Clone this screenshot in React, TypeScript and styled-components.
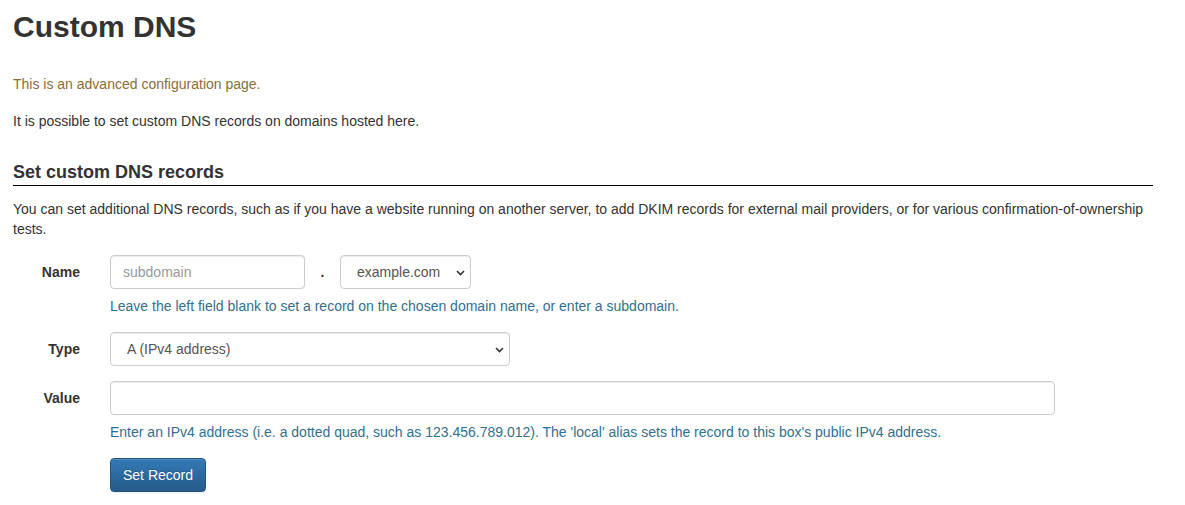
import React, { useState } from 'react';
import styled, { createGlobalStyle } from 'styled-components';

const GlobalStyle = createGlobalStyle`
  html, body {
    margin: 0;
    padding: 0;
    background: #fff;
  }
  body {
    font-family: "Liberation Sans", Arial, Helvetica, sans-serif;
    font-size: 14px;
    line-height: 20px;
    color: #333;
  }
  * {
    box-sizing: border-box;
  }
`;

const Page = styled.div`
  width: 1140px;
  margin-left: 13px;
`;

const Title = styled.h1`
  font-size: 30px;
  font-weight: bold;
  line-height: 33px;
  margin: 10px 0 31px;
`;

const Text = styled.p<{ tone?: 'warning' }>`
  margin: 0 0 ${props => (props.tone === 'warning' ? '17px' : '10px')};
  color: ${props => (props.tone === 'warning' ? '#8a6d3b' : '#333')};
`;

const SectionTitle = styled.h3`
  font-size: 18px;
  font-weight: bold;
  line-height: 20px;
  margin: 31px 0 13px;
  padding-bottom: 3px;
  border-bottom: 1px solid #000;
`;

const Form = styled.form`
  padding-top: 6px;
`;

const FormGroup = styled.div`
  display: grid;
  grid-template-columns: 67px 945px;
  column-gap: 30px;
  margin-bottom: 15px;
`;

const Label = styled.label`
  font-weight: bold;
  text-align: right;
  padding-top: 7px;
`;

const Field = styled.div`
  grid-column: 2;
`;

const Inline = styled.div`
  display: flex;
  align-items: flex-start;
`;

const Dot = styled.span`
  width: 35px;
  text-align: center;
  font-weight: bold;
  padding-top: 7px;
`;

const Input = styled.input<{ width?: string }>`
  display: block;
  width: ${props => props.width || '100%'};
  height: 34px;
  padding: 6px 12px;
  font: inherit;
  color: #555;
  background: #fff;
  border: 1px solid #ccc;
  border-radius: 4px;
  box-shadow: inset 0 1px 1px rgba(0, 0, 0, 0.075);
  outline: none;

  &::placeholder {
    color: #999;
  }
`;

const SelectWrap = styled.div<{ width: string }>`
  position: relative;
  width: ${props => props.width};
`;

const Select = styled.select`
  display: block;
  width: 100%;
  height: 34px;
  padding: 6px 24px 6px 16px;
  font: inherit;
  color: #555;
  background: #fff;
  border: 1px solid #ccc;
  border-radius: 4px;
  box-shadow: inset 0 1px 1px rgba(0, 0, 0, 0.075);
  appearance: none;
  -webkit-appearance: none;
  outline: none;
`;

const Chevron = styled.svg`
  position: absolute;
  right: 6px;
  top: 15px;
  pointer-events: none;
`;

const Help = styled.div`
  color: #31708f;
  margin: 7px 0 1px;
`;

const Button = styled.button`
  display: inline-block;
  height: 34px;
  padding: 6px 12px;
  font: inherit;
  color: #fff;
  text-shadow: 0 -1px 0 rgba(0, 0, 0, 0.2);
  background-image: linear-gradient(to bottom, #337ab7 0%, #265a88 100%);
  border: 1px solid #245580;
  border-radius: 4px;
  box-shadow: inset 0 1px 0 rgba(255, 255, 255, 0.15), 0 1px 1px rgba(0, 0, 0, 0.075);
  cursor: pointer;
`;

const DropSelect: React.FC<{
  width: string;
  value: string;
  options: string[];
  onChange: (v: string) => void;
}> = ({ width, value, options, onChange }) => (
  <SelectWrap width={width}>
    <Select value={value} onChange={e => onChange(e.target.value)}>
      {options.map(o => (
        <option key={o} value={o}>{o}</option>
      ))}
    </Select>
    <Chevron width="9" height="6" viewBox="0 0 9 6">
      <path d="M1 1 L4.5 4.5 L8 1" fill="none" stroke="#333" strokeWidth="1.6" />
    </Chevron>
  </SelectWrap>
);

const types = [
  'A (IPv4 address)',
  'AAAA (IPv6 address)',
  'CAA (Certificate Authority Authorization)',
  'CNAME (DNS forwarding)',
  'TXT (text record)',
  'MX (mail exchanger)',
  'SRV (service record)',
  'SSHFP (SSH fingerprint record)',
  'NS (DNS subdomain delegation)',
];

export default function App() {
  const [zone, setZone] = useState('example.com');
  const [type, setType] = useState(types[0]);
  const [qname, setQname] = useState('');
  const [value, setValue] = useState('');

  return (
    <Page>
      <GlobalStyle />
      <Title>Custom DNS</Title>
      <Text tone="warning">This is an advanced configuration page.</Text>
      <Text>It is possible to set custom DNS records on domains hosted here.</Text>

      <SectionTitle>Set custom DNS records</SectionTitle>
      <Text>
        You can set additional DNS records, such as if you have a website running on another server, to add DKIM
        records for external mail providers, or for various confirmation-of-ownership tests.
      </Text>

      <Form onSubmit={e => e.preventDefault()}>
        <FormGroup>
          <Label>Name</Label>
          <Field>
            <Inline>
              <Input width="195px" placeholder="subdomain" value={qname} onChange={e => setQname(e.target.value)} />
              <Dot>.</Dot>
              <DropSelect width="131px" value={zone} options={['example.com']} onChange={setZone} />
            </Inline>
            <Help>Leave the left field blank to set a record on the chosen domain name, or enter a subdomain.</Help>
          </Field>
        </FormGroup>

        <FormGroup>
          <Label>Type</Label>
          <Field>
            <DropSelect width="400px" value={type} options={types} onChange={setType} />
          </Field>
        </FormGroup>

        <FormGroup>
          <Label>Value</Label>
          <Field>
            <Input value={value} onChange={e => setValue(e.target.value)} />
            <Help>
              Enter an IPv4 address (i.e. a dotted quad, such as 123.456.789.012). The 'local' alias sets the record
              to this box's public IPv4 address.
            </Help>
          </Field>
        </FormGroup>

        <FormGroup>
          <Field>
            <Button type="submit">Set Record</Button>
          </Field>
        </FormGroup>
      </Form>
    </Page>
  );
}
